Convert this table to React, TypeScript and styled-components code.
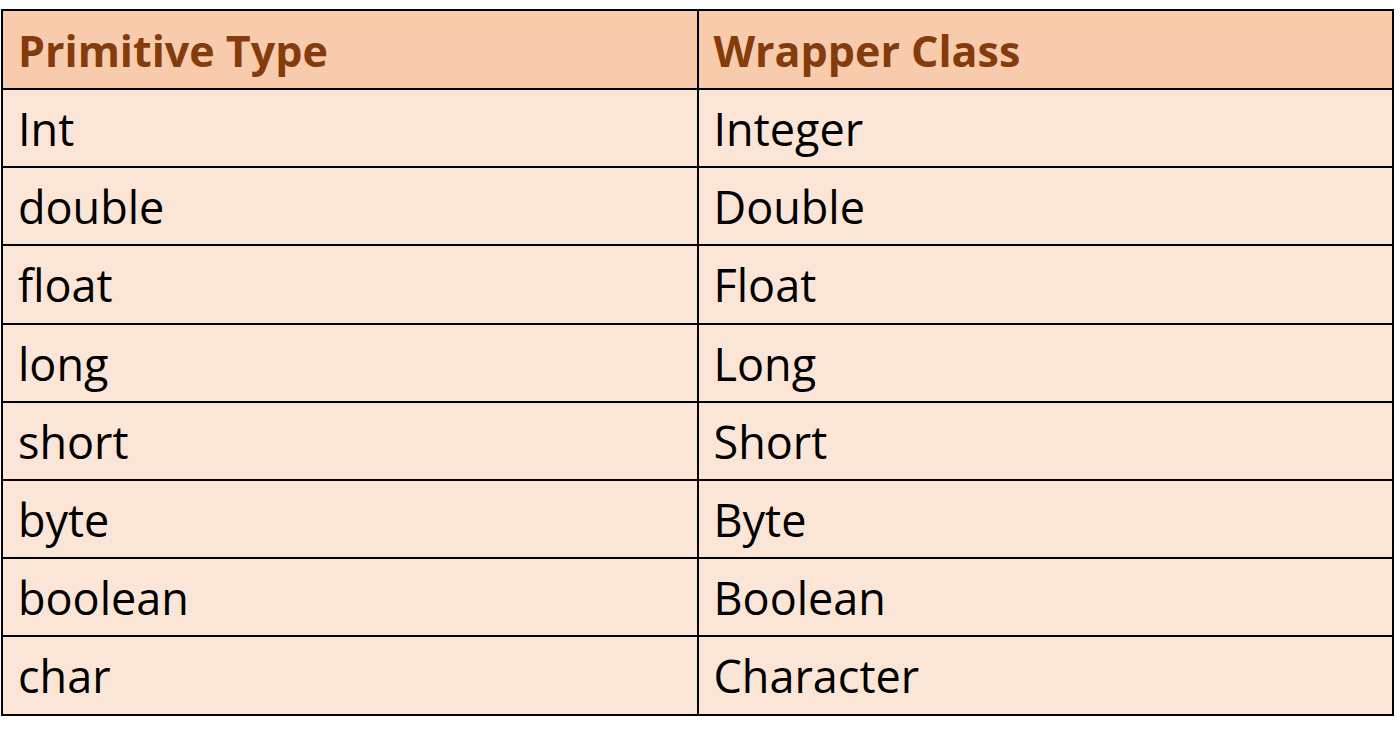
import styled, { createGlobalStyle } from 'styled-components'

const GlobalStyle = createGlobalStyle`
  html, body {
    margin: 0;
    padding: 0;
    background: #ffffff;
  }
`

const Page = styled.div`
  padding: 9px 6px 0 1px;
  width: 1400px;
  box-sizing: border-box;
`

const Table = styled.table`
  width: 1393px;
  border-collapse: collapse;
  border: 2px solid #000000;
  font-family: 'Open Sans', Lato, sans-serif;
`

const Cell = styled.td<{ head?: boolean }>`
  height: ${({ head }) => (head ? '79px' : '78.2px')};
  box-sizing: border-box;
  padding: 2px 0 0 15px;
  border: 2px solid #000000;
  background: ${({ head }) => (head ? '#f8cbad' : '#fbe5d6')};
  color: ${({ head }) => (head ? '#843c0c' : '#000000')};
  font-weight: ${({ head }) => (head ? 700 : 400)};
  font-size: ${({ head }) => (head ? '43px' : '45px')};
  line-height: 1.2;
  text-align: left;
  vertical-align: middle;
  width: 50%;
`

const rows = [
  ['Int', 'Integer'],
  ['double', 'Double'],
  ['float', 'Float'],
  ['long', 'Long'],
  ['short', 'Short'],
  ['byte', 'Byte'],
  ['boolean', 'Boolean'],
  ['char', 'Character'],
]

export default function App() {
  return (
    <Page>
      <GlobalStyle />
      <Table>
        <thead>
          <tr>
            <Cell head as="th">Primitive Type</Cell>
            <Cell head as="th">Wrapper Class</Cell>
          </tr>
        </thead>
        <tbody>
          {rows.map(([p, w]) => (
            <tr key={p}>
              <Cell>{p}</Cell>
              <Cell>{w}</Cell>
            </tr>
          ))}
        </tbody>
      </Table>
    </Page>
  )
}
